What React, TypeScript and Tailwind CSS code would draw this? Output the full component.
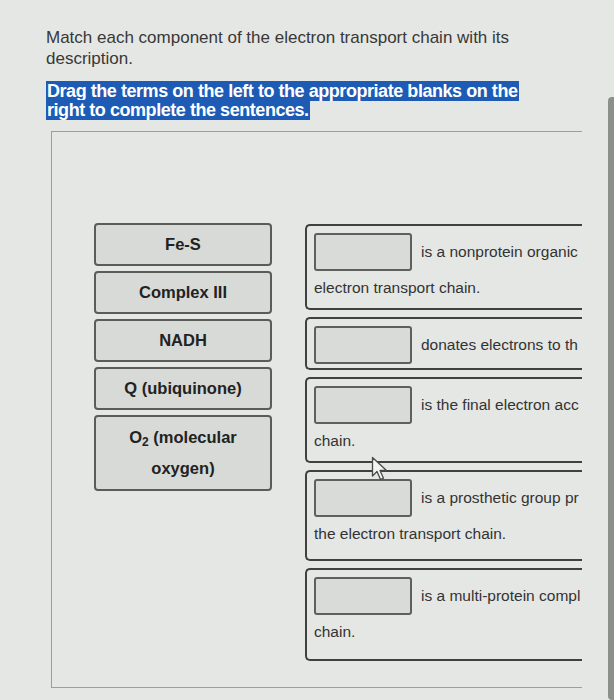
import type { ReactNode } from "react";

const terms: ReactNode[] = [
  "Fe-S",
  "Complex III",
  "NADH",
  "Q (ubiquinone)",
  <>
    O<sub className="text-[12px]">2</sub> (molecular
    <br />
    oxygen)
  </>,
];

type Zone = { lead: string; rest?: string; pad: string };

const zones: Zone[] = [
  { lead: "is a nonprotein organic", rest: "electron transport chain.", pad: "pb-[10px]" },
  { lead: "donates electrons to th", pad: "pb-[4px]" },
  { lead: "is the final electron acc", rest: "chain.", pad: "pb-[10px]" },
  { lead: "is a prosthetic group pr", rest: "the electron transport chain.", pad: "pb-[15px]" },
  { lead: "is a multi-protein compl", rest: "chain.", pad: "pb-[17px]" },
];

function Cursor() {
  return (
    <svg
      className="absolute left-[371px] top-[456px]"
      width="18"
      height="26"
      viewBox="0 0 18 26"
    >
      <path
        d="M1.5 1.5 L1.5 20 L6 15.5 L9.5 23.5 L12.5 22.2 L9 14.5 L15.5 14.5 Z"
        fill="#f4f4f4"
        stroke="#4a4a4a"
        strokeWidth="1.3"
        strokeLinejoin="round"
      />
    </svg>
  );
}

export default function App() {
  return (
    <div className="relative h-[700px] w-[614px] overflow-hidden bg-[#e5e7e4] font-['Liberation_Sans',Arial,sans-serif] text-[#333]">
      <div className="absolute right-0 top-[97px] h-[603px] w-[6px] rounded-l-sm bg-[#8d8f8d]" />

      <div className="pl-[46px] pr-[60px] pt-[27px] text-[17px] leading-[21px] text-[#383838]">
        Match each component of the electron transport chain with its
        <br />
        description.
      </div>

      <div className="mt-[13px] pl-[46px] text-[18px] font-bold leading-[19px] tracking-[-0.45px] text-white">
        <span className="box-decoration-clone bg-[#1d5bb5] px-[1px]">
          Drag the terms on the left to the appropriate blanks on the
          <br />
          right to complete the sentences.
        </span>
      </div>

      <div className="ml-[51px] mt-[11px] h-[557px] w-[531px] overflow-hidden border-l border-t border-b border-[#9c9e9c]">
        <div className="flex gap-[33px] pl-[42px] pt-[91px]">
          <div className="flex w-[178px] shrink-0 flex-col gap-[5px]">
            {terms.map((t, i) => (
              <div
                key={i}
                className={`flex items-center justify-center rounded-[4px] border-2 border-[#5a5c5a] bg-[#d7dad7] px-2 py-[5px] text-center text-[16.5px] font-bold leading-[29px] text-[#222] ${
                  i === terms.length - 1 ? "min-h-[76px] leading-[31px]" : "min-h-[43px]"
                }`}
              >
                <span>{t}</span>
              </div>
            ))}
          </div>

          <div className="flex w-[279px] shrink-0 flex-col gap-[7px] pt-[1px]">
            {zones.map((z, i) => (
              <div
                key={i}
                className={`overflow-hidden rounded-l-[5px] border-y-2 border-l-2 border-[#3f413f] pl-[7px] pt-[7px] ${z.pad}`}
              >
                <div className="flex items-center">
                  <div className="h-[38px] w-[98px] shrink-0 rounded-[3px] border-2 border-[#5e605e] bg-[#d8dbd8]" />
                  <span className="ml-[9px] whitespace-nowrap text-[15.5px] text-[#333]">
                    {z.lead}
                  </span>
                </div>
                {z.rest && (
                  <div className="mt-[7px] whitespace-nowrap text-[15.5px] leading-[20px] text-[#333]">
                    {z.rest}
                  </div>
                )}
              </div>
            ))}
          </div>
        </div>
      </div>

      <Cursor />
    </div>
  );
}
